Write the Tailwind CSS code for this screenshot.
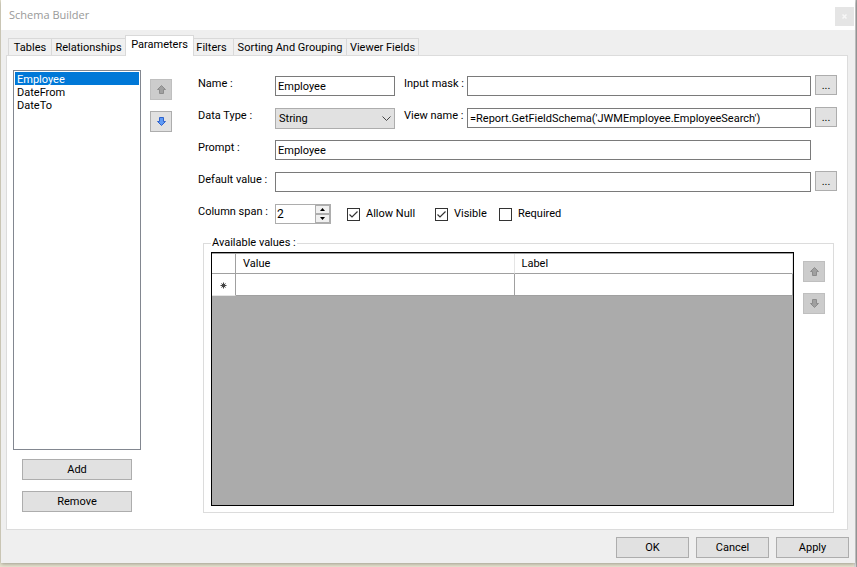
<!DOCTYPE html>
<html lang="en">
<head>
    <meta charset="UTF-8">
    <meta name="viewport" content="width=device-width, initial-scale=1.0">
    <title>Schema Builder</title>
    <script src="https://cdn.jsdelivr.net/npm/@tailwindcss/browser@4"></script>
</head>
<body class="h-screen bg-[linear-gradient(to_left,#a0a0a0_1px,#d8d8d8_1px,#d8d8d8_3px,#e8e4d0_3px)] pl-px pr-[2px] pb-1 font-[Roboto,'Liberation_Sans',Arial,sans-serif] text-[11px] leading-4 text-black">
    <svg class="hidden">
        <symbol id="arrow-up" viewBox="0 0 9 9">
            <path d="M4.5 0.5 8.5 4.5H6.5V8.5H2.5V4.5H0.5Z"/>
        </symbol>
        <symbol id="arrow-down" viewBox="0 0 9 9">
            <path d="M2.5 0.5H6.5V4.5H8.5L4.5 8.5 0.5 4.5H2.5Z"/>
        </symbol>
    </svg>

    <div class="flex h-full flex-col bg-[#efefef] shadow-[0_1px_4px_#00000055]">
        <!-- Title bar -->
        <header class="flex h-[30px] shrink-0 items-center justify-between bg-white pl-2 pr-px">
            <h1 class="font-['Open_Sans','Noto_Sans',sans-serif] text-[11px] text-[#999]">Schema Builder</h1>
            <button type="button" aria-label="Close" class="mt-[2px] flex size-[19px] items-center justify-center bg-[#e5e5e5]">
                <svg class="size-[5px]" viewBox="0 0 5 5"><path d="M0.5 0.5 4.5 4.5M4.5 0.5 0.5 4.5" stroke="#f7f7f7" stroke-width="1.5"/></svg>
            </button>
        </header>

        <!-- Tabs -->
        <nav class="flex h-[25px] shrink-0 items-end pl-[7px] whitespace-nowrap">
            <button type="button" class="h-[17px] w-[44px] border border-b-0 border-[#d9d9d9] bg-[#f0f0f0] pt-px">Tables</button>
            <button type="button" class="h-[17px] w-[73px] border-t border-[#d9d9d9] bg-[#f0f0f0] pt-px">Relationships</button>
            <button type="button" class="relative z-10 -mb-px h-[21px] w-[69px] border border-b-0 border-[#d9d9d9] bg-white pb-[2px]">Parameters</button>
            <button type="button" class="h-[17px] w-[40px] border-t border-r border-[#d9d9d9] bg-[#f0f0f0] pt-px pr-1">Filters</button>
            <button type="button" class="h-[17px] w-[113px] border-t border-r border-[#d9d9d9] bg-[#f0f0f0] pt-px">Sorting And Grouping</button>
            <button type="button" class="h-[17px] w-[72px] border-t border-r border-[#d9d9d9] bg-[#f0f0f0] pt-px">Viewer Fields</button>
        </nav>

        <main class="mr-[7px] ml-[5px] flex min-h-0 flex-1 border border-[#dcdcdc] bg-white pt-[14px] pr-[10px] pb-4 pl-[6px]">
            <!-- Parameter list -->
            <section class="flex w-32 shrink-0 flex-col pb-px">
                <select size="20" aria-label="Parameters" class="min-h-0 w-full flex-1 overflow-hidden border border-[#828790] bg-white p-px">
                    <option selected class="h-[13px] min-h-0 bg-[linear-gradient(#0078d7,#0078d7)] p-0 pt-px pl-[2px] leading-[13px] text-white!">Employee</option>
                    <option class="h-[13px] min-h-0 p-0 pt-px pl-[2px] leading-[13px]">DateFrom</option>
                    <option class="h-[13px] min-h-0 p-0 pt-px pl-[2px] leading-[13px]">DateTo</option>
                </select>
                <div class="flex flex-col gap-[11px] px-[9px] pt-[9px]">
                    <button type="button" class="h-[21px] border border-[#adadad] bg-[#e1e1e1]">Add</button>
                    <button type="button" class="h-[21px] border border-[#adadad] bg-[#e1e1e1]">Remove</button>
                </div>
            </section>

            <div class="ml-[9px] flex shrink-0 flex-col gap-[11px] pt-[9px]">
                <button type="button" disabled aria-label="Move parameter up" class="flex h-[21px] w-[22px] items-center justify-center border border-[#bfbfbf] bg-[#ccc]">
                    <svg class="size-[9px] fill-[#a0a0a0] stroke-[#8c8c8c]"><use href="#arrow-up"/></svg>
                </button>
                <button type="button" aria-label="Move parameter down" class="flex h-[21px] w-[22px] items-center justify-center border border-[#adadad] bg-[#e1e1e1]">
                    <svg class="size-[9px] fill-[#5f9bf5] stroke-[#2f62cc]"><use href="#arrow-down"/></svg>
                </button>
            </div>

            <!-- Parameter details -->
            <form class="ml-[26px] flex min-w-0 flex-1 flex-col pt-[5px]">
                <div class="grid shrink-0 auto-rows-[32px] grid-cols-[77px_120px_72px_minmax(0,1fr)_26px] items-start whitespace-nowrap [&>label]:pt-px">
                    <label for="name">Name :</label>
                    <input id="name" type="text" value="Employee" class="mt-px h-5 w-full border border-[#7a7a7a] px-[2px]">
                    <label for="mask" class="pl-[9px]">Input mask :</label>
                    <input id="mask" type="text" class="mt-px h-5 w-full border border-[#7a7a7a] px-[2px]">
                    <button type="button" aria-label="Edit input mask" class="h-5 w-[22px] justify-self-end border border-[#adadad] bg-[#e1e1e1] pt-px">...</button>

                    <label for="type">Data Type :</label>
                    <div class="relative mt-px">
                        <select id="type" class="h-[21px] w-full appearance-none border border-[#adadad] bg-[#e1e1e1] px-[3px]">
                            <option>String</option>
                        </select>
                        <svg class="pointer-events-none absolute top-2 right-1 h-[6px] w-[9px] fill-none stroke-[#444]" viewBox="0 0 9 6"><path d="M0.5 0.5 4.5 4.5 8.5 0.5"/></svg>
                    </div>
                    <label for="view" class="pl-[9px]">View name :</label>
                    <input id="view" type="text" value="=Report.GetFieldSchema('JWMEmployee.EmployeeSearch')" class="mt-px h-5 w-full border border-[#7a7a7a] px-[2px]">
                    <button type="button" aria-label="Edit view name" class="h-5 w-[22px] justify-self-end border border-[#adadad] bg-[#e1e1e1] pt-px">...</button>

                    <label for="prompt">Prompt :</label>
                    <input id="prompt" type="text" value="Employee" class="col-span-3 mt-px h-5 w-full border border-[#7a7a7a] px-[2px]">

                    <label for="default" class="col-start-1">Default value :</label>
                    <input id="default" type="text" class="col-span-3 mt-px h-5 w-full border border-[#7a7a7a] px-[2px]">
                    <button type="button" aria-label="Edit default value" class="h-5 w-[22px] justify-self-end border border-[#adadad] bg-[#e1e1e1] pt-px">...</button>

                    <label for="span">Column span :</label>
                    <div class="col-span-4 mt-px flex h-5 items-center">
                        <div class="flex h-5 w-14 border border-[#adadad]">
                            <input id="span" type="text" value="2" class="min-w-0 flex-1 px-px text-[12px]">
                            <div class="flex w-[15px] flex-col">
                                <button type="button" aria-label="Increase" class="flex h-[9px] items-center justify-center border border-[#adadad] bg-[#f0f0f0]">
                                    <svg class="h-[3px] w-[5px]" viewBox="0 0 5 3"><path d="M2.5 0 5 3H0Z"/></svg>
                                </button>
                                <button type="button" aria-label="Decrease" class="flex h-[9px] items-center justify-center border border-[#adadad] bg-[#f0f0f0]">
                                    <svg class="h-[3px] w-[5px]" viewBox="0 0 5 3"><path d="M0 0H5L2.5 3Z"/></svg>
                                </button>
                            </div>
                        </div>
                        <label class="ml-4 flex w-[88px] items-center gap-[6px]">
                            <span class="relative size-[13px]">
                                <input type="checkbox" checked class="peer block size-[13px] appearance-none border border-[#333] bg-white">
                                <svg class="pointer-events-none absolute inset-0 hidden size-[13px] fill-none stroke-[#333] peer-checked:block" viewBox="0 0 13 13"><path d="M2.5 6.5 5 9 10.5 3.5" stroke-width="1.2"/></svg>
                            </span>
                            Allow Null
                        </label>
                        <label class="flex w-16 items-center gap-[6px]">
                            <span class="relative size-[13px]">
                                <input type="checkbox" checked class="peer block size-[13px] appearance-none border border-[#333] bg-white">
                                <svg class="pointer-events-none absolute inset-0 hidden size-[13px] fill-none stroke-[#333] peer-checked:block" viewBox="0 0 13 13"><path d="M2.5 6.5 5 9 10.5 3.5" stroke-width="1.2"/></svg>
                            </span>
                            Visible
                        </label>
                        <label class="flex items-center gap-[6px]">
                            <span class="relative size-[13px]">
                                <input type="checkbox" class="peer block size-[13px] appearance-none border border-[#333] bg-white">
                                <svg class="pointer-events-none absolute inset-0 hidden size-[13px] fill-none stroke-[#333] peer-checked:block" viewBox="0 0 13 13"><path d="M2.5 6.5 5 9 10.5 3.5" stroke-width="1.2"/></svg>
                            </span>
                            Required
                        </label>
                    </div>
                </div>

                <fieldset class="mr-[3px] ml-[5px] flex min-h-0 min-w-0 flex-1 flex-col border border-[#dcdcdc] pr-2 pb-[6px] pl-[7px]">
                    <legend class="px-px">Available values :</legend>
                    <div class="mt-px flex min-h-0 flex-1 gap-[9px]">
                        <div class="min-w-0 flex-1 border border-black bg-[#ababab]">
                            <table class="w-full table-fixed border-separate border-spacing-0 border-t border-[#a0a0a0] bg-white text-left">
                                <colgroup>
                                    <col class="w-6">
                                    <col>
                                    <col>
                                </colgroup>
                                <thead>
                                    <tr class="h-5">
                                        <th class="border-r border-b border-[#a0a0a0] p-0"></th>
                                        <th class="border-r border-b border-r-[#e5e5e5] border-b-[#a0a0a0] p-0 pt-px pl-[7px] font-normal">Value</th>
                                        <th class="border-r border-b border-r-[#e5e5e5] border-b-[#a0a0a0] p-0 pt-px pl-[7px] font-normal">Label</th>
                                    </tr>
                                </thead>
                                <tbody>
                                    <tr class="h-[22px]">
                                        <td class="border-r border-b border-r-[#a0a0a0] border-b-[#e5e5e5] p-0 pt-px">
                                            <svg class="mx-auto size-[7px] fill-[#666] stroke-[#444]" viewBox="0 0 7 7"><circle cx="3.5" cy="3.5" r="1.5"/><path d="M3.5 0.5V6.5M0.5 3.5H6.5M1.5 1.5 5.5 5.5M5.5 1.5 1.5 5.5"/></svg>
                                        </td>
                                        <td class="border-r border-b border-[#a0a0a0] p-0"></td>
                                        <td class="border-r border-b border-[#a0a0a0] p-0"></td>
                                    </tr>
                                </tbody>
                            </table>
                        </div>
                        <div class="flex shrink-0 flex-col gap-[11px] pt-[9px]">
                            <button type="button" disabled aria-label="Move value up" class="flex h-[21px] w-[22px] items-center justify-center border border-[#bfbfbf] bg-[#ccc]">
                                <svg class="size-[9px] fill-[#a0a0a0] stroke-[#8c8c8c]"><use href="#arrow-up"/></svg>
                            </button>
                            <button type="button" disabled aria-label="Move value down" class="flex h-[21px] w-[22px] items-center justify-center border border-[#bfbfbf] bg-[#ccc]">
                                <svg class="size-[9px] fill-[#a0a0a0] stroke-[#8c8c8c]"><use href="#arrow-down"/></svg>
                            </button>
                        </div>
                    </div>
                </fieldset>
            </form>
        </main>

        <footer class="flex h-[33px] shrink-0 items-start justify-end gap-[7px] pt-[7px] pr-[6px]">
            <button type="button" class="h-[21px] w-[73px] border border-[#adadad] bg-[#e1e1e1]">OK</button>
            <button type="button" class="h-[21px] w-[73px] border border-[#adadad] bg-[#e1e1e1]">Cancel</button>
            <button type="button" class="h-[21px] w-[73px] border border-[#adadad] bg-[#e1e1e1]">Apply</button>
        </footer>
    </div>
</body>
</html>
